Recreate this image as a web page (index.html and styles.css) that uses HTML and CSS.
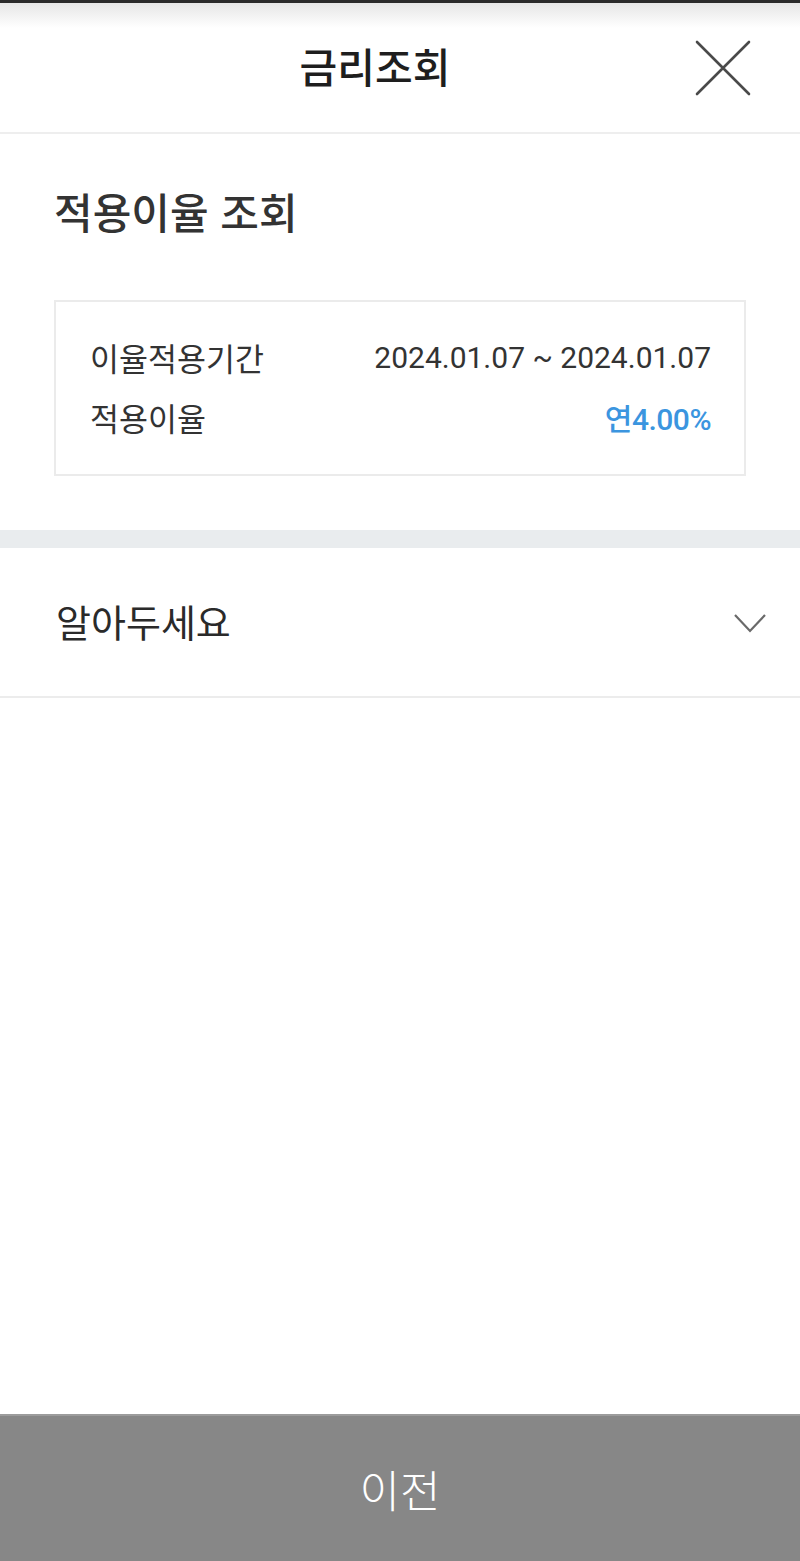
FILE: index.html
```html
<!DOCTYPE html>
<html lang="ko">
<head>
<meta charset="utf-8">
<link rel="stylesheet" href="styles.css">
</head>
<body>
<div class="page">
  <div class="topbar"></div>
  <header class="header">
    <h1 class="header-title">금리조회</h1>
    <button class="close" aria-label="닫기">
      <svg width="56" height="56" viewBox="0 0 56 56"><path d="M2 2 L54 54 M54 2 L2 54" stroke="#4a4a4a" stroke-width="2.6" fill="none" stroke-linecap="round"/></svg>
    </button>
  </header>
  <section class="content">
    <h2 class="section-title">적용이율 조회</h2>
    <div class="info-box">
      <div class="info-row">
        <span class="label">이율적용기간</span>
        <span class="value">2024.01.07 ~ 2024.01.07</span>
      </div>
      <div class="info-row">
        <span class="label">적용이율</span>
        <span class="value rate">연4.00%</span>
      </div>
    </div>
  </section>
  <div class="divider"></div>
  <div class="accordion">
    <span class="acc-title">알아두세요</span>
    <svg class="chev" width="34" height="22" viewBox="0 0 34 22"><path d="M2 3 L17 19 L32 3" stroke="#6a6a6a" stroke-width="2.2" fill="none"/></svg>
  </div>
  <div class="spacer"></div>
  <button class="prev">이전</button>
</div>
</body>
</html>
```

FILE: styles.css
```css
html, body {
  margin: 0;
  padding: 0;
  background: #ffffff;
}
body {
  font-family: "Roboto", "Noto Sans CJK KR", sans-serif;
  color: #333333;
}
.page {
  width: 800px;
  height: 1561px;
  display: flex;
  flex-direction: column;
}
.topbar {
  height: 28px;
  flex: none;
  border-top: 3px solid #2a2a2a;
  box-sizing: border-box;
  background: linear-gradient(#e6e6e6, #ffffff);
}
.header {
  height: 106px;
  flex: none;
  display: flex;
  align-items: center;
  justify-content: center;
  position: relative;
  border-bottom: 2px solid #eeeeee;
  box-sizing: border-box;
}
.header-title {
  margin: 0 50px 30px 0;
  font-family: "Noto Sans CJK KR", sans-serif;
  font-size: 41px;
  font-weight: 500;
  color: #1e1e1e;
  line-height: 50px;
}
.close {
  position: absolute;
  right: 49px;
  top: 12px;
  width: 56px;
  height: 56px;
  padding: 0;
  border: 0;
  background: none;
}
.close svg { display: block; }
.content {
  padding: 51px 54px 54px 54px;
}
.section-title {
  margin: 0 0 63px 0;
  font-family: "Noto Sans CJK KR", sans-serif;
  font-size: 42px;
  font-weight: 500;
  color: #333333;
  line-height: 52px;
}
.info-box {
  border: 2px solid #ebebeb;
  padding: 27px 33px 29px 34px;
  display: flex;
  flex-direction: column;
  gap: 4px;
}
.info-row {
  display: flex;
  justify-content: space-between;
  align-items: center;
  height: 56px;
}
.label {
  font-family: "Noto Sans CJK KR", sans-serif;
  font-size: 31.5px;
  color: #333333;
}
.value {
  font-family: "Roboto", "Noto Sans CJK KR", sans-serif;
  font-size: 30px;
  color: #333333;
}
.rate {
  color: #3b95df;
  font-weight: 500;
  letter-spacing: -0.5px;
}
.divider {
  height: 18px;
  flex: none;
  background: #e9ecee;
}
.accordion {
  height: 150px;
  flex: none;
  display: flex;
  align-items: center;
  justify-content: space-between;
  padding: 0 33px 0 56px;
  border-bottom: 2px solid #ececec;
  box-sizing: border-box;
}
.acc-title {
  font-family: "Noto Sans CJK KR", sans-serif;
  font-size: 38px;
  color: #2a2a2a;
  margin-top: -4px;
}
.chev { display: block; margin-top: 2px; }
.spacer { flex: 1; }
.prev {
  flex: none;
  height: 147px;
  width: 100%;
  border: 0;
  border-top: 2px solid #9c9c9c;
  background: #878787;
  color: #ffffff;
  font-family: "Noto Sans CJK KR", sans-serif;
  font-size: 44px;
  font-weight: 300;
  padding: 0;
}
```
